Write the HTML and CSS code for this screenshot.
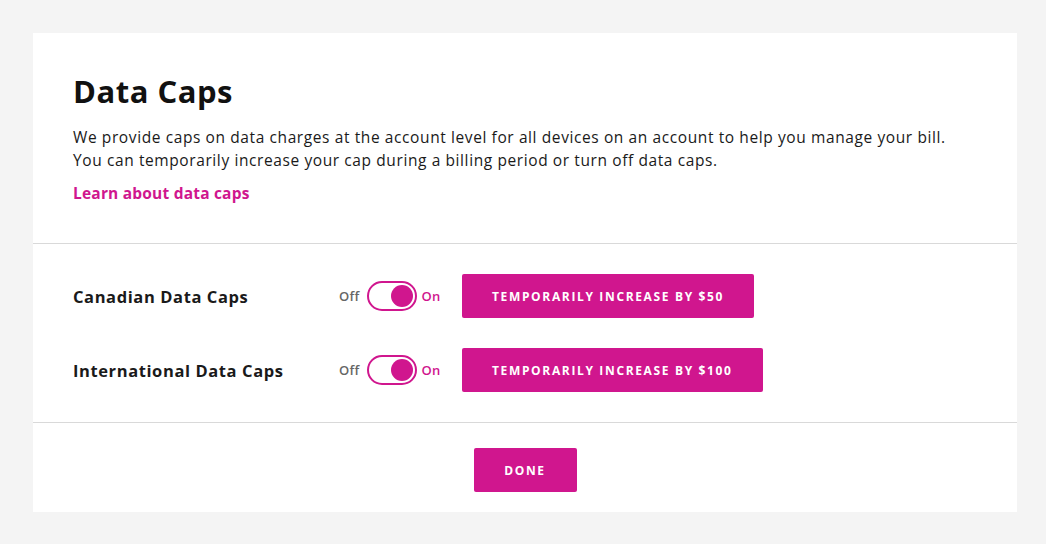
FILE: index.html
```html
<!DOCTYPE html>
<html>
<head>
    <title>Data Caps</title>
    <link rel="stylesheet" href="styles.css">
</head>
<body>
    <div class="card">
        <div class="intro">
            <h1>Data Caps</h1>
            <p>We provide caps on data charges at the account level for all devices on an account to help you manage your bill.<br>
            You can temporarily increase your cap during a billing period or turn off data caps.</p>
            <a class="learn" href="#">Learn about data caps</a>
        </div>

        <div class="caps">
            <div class="cap-row">
                <span class="cap-name">Canadian Data Caps</span>
                <div class="switch">
                    <span class="off">Off</span>
                    <span class="track"><span class="knob"></span></span>
                    <span class="on">On</span>
                </div>
                <button class="btn">Temporarily increase by $50</button>
            </div>
            <div class="cap-row">
                <span class="cap-name">International Data Caps</span>
                <div class="switch">
                    <span class="off">Off</span>
                    <span class="track"><span class="knob"></span></span>
                    <span class="on">On</span>
                </div>
                <button class="btn">Temporarily increase by $100</button>
            </div>
        </div>

        <div class="footer">
            <button class="btn done">Done</button>
        </div>
    </div>
</body>
</html>
```

FILE: styles.css
```css
body {
    margin: 0;
    padding: 33px 29px 32px 33px;
    background-color: #f4f4f4;
    font-family: 'Open Sans', 'Liberation Sans', sans-serif;
    color: #1a1a1a;
}

.card {
    background-color: #fff;
}

.intro {
    padding: 39px 40px 38px 40px;
    border-bottom: 1px solid #d9d9d9;
}

h1 {
    margin: 0 0 16px 0;
    font-size: 31px;
    font-weight: 700;
    line-height: 38px;
    letter-spacing: 0.5px;
    color: #111;
}

.intro p {
    margin: 0 0 9px 0;
    font-size: 15.5px;
    line-height: 23px;
    font-weight: 400;
    letter-spacing: 0.6px;
}

.learn {
    display: block;
    font-size: 15.5px;
    font-weight: 700;
    line-height: 24px;
    letter-spacing: 0.2px;
    color: #d0168e;
    text-decoration: none;
}

.caps {
    padding: 30px 40px 30px 40px;
    border-bottom: 1px solid #d9d9d9;
    display: flex;
    flex-direction: column;
    gap: 30px;
}

.cap-row {
    display: flex;
    align-items: center;
    height: 44px;
}

.cap-name {
    width: 266px;
    font-size: 16.5px;
    font-weight: 700;
    letter-spacing: 0.6px;
}

.switch {
    display: flex;
    align-items: center;
    gap: 5px;
    width: 123px;
    font-size: 13px;
    font-weight: 600;
}

.off {
    color: #666;
    margin-right: 2px;
    letter-spacing: 0.3px;
}

.on {
    color: #d0168e;
    letter-spacing: 0.3px;
}

.track {
    box-sizing: border-box;
    width: 50px;
    height: 30px;
    border: 2px solid #d0168e;
    border-radius: 15px;
    display: flex;
    justify-content: flex-end;
    align-items: center;
    padding-right: 2px;
}

.knob {
    width: 22px;
    height: 22px;
    border-radius: 50%;
    background-color: #d0168e;
}

.btn {
    height: 44px;
    padding: 0 30px;
    background-color: #d0168e;
    color: #fff;
    border: none;
    border-radius: 2px;
    font-family: inherit;
    font-size: 12px;
    font-weight: 700;
    letter-spacing: 1.65px;
    text-transform: uppercase;
    cursor: pointer;
}

.footer {
    display: flex;
    justify-content: center;
    padding: 25px 0 20px 0;
}

.done {
    width: 103px;
    padding: 0;
}
```
